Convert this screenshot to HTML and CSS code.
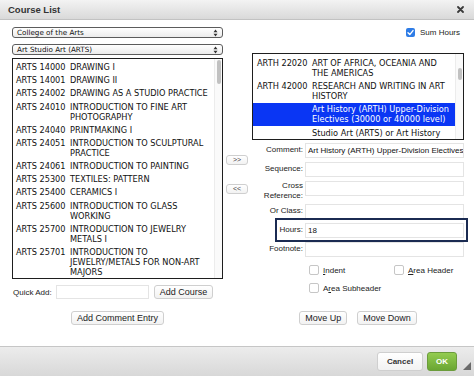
FILE: index.html
```html
<!DOCTYPE html>
<html lang="en">
<head>
  <meta charset="UTF-8" />
  <title>Course List</title>
  <link rel="stylesheet" href="styles.css">
</head>
<body>
  <div class="dialog">
    <div class="titlebar">
      <h1>Course List</h1>
      <svg class="close" width="7" height="7" viewBox="0 0 7 7"><path d="M1 1L6 6M6 1L1 6" stroke="#3a3a3a" stroke-width="1.8" stroke-linecap="round"/></svg>
    </div>

    <div class="content">
      <div class="left">
        <div class="select">
          <span>College of the Arts</span>
          <svg width="5" height="8" viewBox="0 0 5 8"><path d="M0.5 3.2L2.5 0.6L4.5 3.2Z M0.5 4.8L2.5 7.4L4.5 4.8Z" fill="#333"/></svg>
        </div>
        <div class="select">
          <span>Art Studio Art (ARTS)</span>
          <svg width="5" height="8" viewBox="0 0 5 8"><path d="M0.5 3.2L2.5 0.6L4.5 3.2Z M0.5 4.8L2.5 7.4L4.5 4.8Z" fill="#333"/></svg>
        </div>

        <div class="listbox tall">
          <div class="items">
            <div class="item"><span class="code">ARTS 14000</span><span class="name">DRAWING I</span></div>
            <div class="item"><span class="code">ARTS 14001</span><span class="name">DRAWING II</span></div>
            <div class="item"><span class="code">ARTS 24002</span><span class="name">DRAWING AS A STUDIO PRACTICE</span></div>
            <div class="item"><span class="code">ARTS 24010</span><span class="name">INTRODUCTION TO FINE ART PHOTOGRAPHY</span></div>
            <div class="item"><span class="code">ARTS 24040</span><span class="name">PRINTMAKING I</span></div>
            <div class="item"><span class="code">ARTS 24051</span><span class="name">INTRODUCTION TO SCULPTURAL PRACTICE</span></div>
            <div class="item"><span class="code">ARTS 24061</span><span class="name">INTRODUCTION TO PAINTING</span></div>
            <div class="item"><span class="code">ARTS 25300</span><span class="name">TEXTILES: PATTERN</span></div>
            <div class="item"><span class="code">ARTS 25400</span><span class="name">CERAMICS I</span></div>
            <div class="item"><span class="code">ARTS 25600</span><span class="name">INTRODUCTION TO GLASS WORKING</span></div>
            <div class="item"><span class="code">ARTS 25700</span><span class="name">INTRODUCTION TO JEWELRY METALS I</span></div>
            <div class="item"><span class="code">ARTS 25701</span><span class="name">INTRODUCTION TO JEWELRY/METALS FOR NON-ART MAJORS</span></div>
          </div>
          <div class="scroll"><div class="thumb"></div></div>
        </div>

        <div class="quick">
          <label>Quick Add:</label>
          <input type="text" />
          <button>Add Course</button>
        </div>

        <div class="actions">
          <button>Add Comment Entry</button>
        </div>
      </div>

      <div class="mid">
        <button>&gt;&gt;</button>
        <button>&lt;&lt;</button>
      </div>

      <div class="right">
        <div class="sum">
          <span class="check-on">
            <svg width="9" height="9" viewBox="0 0 9 9"><path d="M2 4.8L3.8 6.6L7 2.6" fill="none" stroke="#fff" stroke-width="1.4" stroke-linecap="round" stroke-linejoin="round"/></svg>
          </span>
          <span>Sum Hours</span>
        </div>

        <div class="listbox short">
          <div class="items">
            <div class="item"><span class="code">ARTH 22020</span><span class="name">ART OF AFRICA, OCEANIA AND THE AMERICAS</span></div>
            <div class="item"><span class="code">ARTH 42000</span><span class="name">RESEARCH AND WRITING IN ART HISTORY</span></div>
            <div class="item sel"><span class="code"></span><span class="name">Art History (ARTH) Upper-Division Electives (30000 or 40000 level)</span></div>
            <div class="item"><span class="code"></span><span class="name">Studio Art (ARTS) or Art History</span></div>
          </div>
          <div class="scroll"><div class="thumb"></div></div>
        </div>

        <div class="form">
          <div class="row">
            <label>Comment:</label>
            <input type="text" value="Art History (ARTH) Upper-Division Electives" />
          </div>
          <div class="row">
            <label>Sequence:</label>
            <input type="text" />
          </div>
          <div class="row two">
            <label>Cross Reference:</label>
            <input type="text" />
          </div>
          <div class="row">
            <label>Or Class:</label>
            <input type="text" />
          </div>
          <div class="row focus">
            <label>Hours:</label>
            <input type="text" value="18" />
          </div>
          <div class="row">
            <label>Footnote:</label>
            <input type="text" />
          </div>
        </div>

        <div class="checks">
          <div class="opt"><span class="box"></span><span><u>I</u>ndent</span></div>
          <div class="opt"><span class="box"></span><span><u>A</u>rea Header</span></div>
          <div class="opt"><span class="box"></span><span>A<u>r</u>ea Subheader</span></div>
        </div>

        <div class="actions">
          <button>Move Up</button>
          <button>Move Down</button>
        </div>
      </div>
    </div>

    <div class="footer">
      <button class="btn cancel">Cancel</button>
      <button class="btn ok">OK</button>
      <svg class="grip" width="8" height="8" viewBox="0 0 8 8"><path d="M8 0L8 8L0 8Z" fill="#6a6a6a"/></svg>
    </div>
  </div>
</body>
</html>
```

FILE: styles.css
```css
:root {
  --ui: "Liberation Sans", Arial, sans-serif;
  --list: "DejaVu Sans", Verdana, sans-serif;
  --select: #0a36f4;
  --field: #e4e4e4;
}

* {
  box-sizing: border-box;
}

body {
  margin: 0;
  font-family: var(--ui);
  font-size: 8px;
  color: #222;
  background: #fff;
}

.dialog {
  width: 474px;
  height: 376px;
  display: flex;
  flex-direction: column;
  overflow: hidden;
}

/* title bar */
.titlebar {
  height: 20px;
  flex: none;
  display: flex;
  align-items: center;
  justify-content: space-between;
  padding: 0 10px 0 8px;
  background: linear-gradient(#f3f3f3, #d9d9d9);
  border-bottom: 1px solid #c2c2c2;
}

.titlebar h1 {
  margin: 0;
  font-size: 9.5px;
  font-weight: bold;
  color: #333;
}

/* main area */
.content {
  flex: 1;
  display: flex;
  padding: 7px 10px 0 12px;
}

.left {
  width: 211px;
}

.mid {
  width: 29px;
  display: flex;
  flex-direction: column;
  gap: 19px;
  padding: 128px 0 0 3px;
}

.right {
  width: 212px;
}

.select {
  height: 11px;
  display: flex;
  align-items: center;
  justify-content: space-between;
  padding: 0 4px 0 4px;
  margin-bottom: 6px;
  border: 1px solid #5c5c5c;
  border-radius: 3px;
  background: linear-gradient(#fff, #ececec);
  font-family: var(--list);
  font-size: 7.2px;
  color: #111;
}

.select + .select {
  margin-bottom: 3px;
}

/* list boxes */
.listbox {
  display: flex;
  border: 1px solid #1e1e1e;
  background: #fff;
  overflow: hidden;
  font-family: var(--list);
  font-size: 8.2px;
  line-height: 10px;
  color: #111;
}

.listbox.tall {
  height: 221px;
}

.listbox.short {
  height: 87px;
  margin-top: 15px;
}

.items {
  flex: 1;
  overflow: hidden;
  padding-top: 1.4px;
}

.short .items {
  padding-top: 2.4px;
}

.item {
  display: flex;
  padding: 1.6px 1px 1.6px 3px;
}

.short .item {
  padding: 1.6px 3px 1.6px 4px;
}

.item .code {
  width: 54px;
  flex: none;
}

.short .item .code {
  width: 55px;
}

.item .name {
  flex: 1;
}

.item.sel {
  background: var(--select);
  color: #fff;
}

.scroll {
  width: 8px;
  flex: none;
  background: #fafafa;
  border-left: 1px solid #ececec;
}

.thumb {
  width: 4px;
  height: 24px;
  margin: 1px auto 0;
  border-radius: 2px;
  background: #c1c1c1;
}

.short .thumb {
  height: 12px;
  margin-top: 14px;
}

/* buttons */
button {
  height: 14px;
  padding: 0 5px;
  border: 1px solid #cfcfcf;
  border-radius: 3px;
  background: linear-gradient(#fff, #f2f2f2);
  font-family: var(--ui);
  font-size: 9px;
  line-height: 12px;
  color: #222;
}

.mid button {
  width: 22px;
  height: 10px;
  padding: 0;
  font-size: 7px;
  line-height: 8px;
  color: #444;
}

.actions {
  display: flex;
  justify-content: center;
  gap: 10px;
}

.left .actions {
  margin-top: 12px;
}

.right .actions {
  margin-top: 18px;
}

.quick {
  display: flex;
  align-items: center;
  height: 14px;
  margin-top: 6px;
  padding-left: 1px;
}

.quick input {
  width: 93px;
  height: 14px;
  margin-left: 4px;
  border: 1px solid var(--field);
}

.quick button {
  margin-left: 5px;
}

/* right side form */
.sum {
  height: 11px;
  display: flex;
  align-items: center;
  justify-content: flex-end;
  gap: 5px;
  padding-right: 4px;
}

.check-on {
  width: 9px;
  height: 9px;
  display: flex;
  border-radius: 2px;
  background: #2e7ce6;
}

.form {
  display: flex;
  flex-direction: column;
  gap: 4px;
  margin-top: 3px;
}

.row {
  display: flex;
  align-items: flex-start;
}

.row label {
  width: 51px;
  flex: none;
  margin-right: 2px;
  padding-top: 2px;
  text-align: right;
  line-height: 9.5px;
  color: #222;
}

.row.two label {
  padding-top: 0;
}

.row input {
  flex: 1;
  min-width: 0;
  height: 15px;
  padding: 0 0 0 2px;
  border: 1px solid var(--field);
  font-family: var(--ui);
  font-size: 8px;
  color: #111;
}

.row.focus {
  position: relative;
}

.row.focus::after {
  content: "";
  position: absolute;
  left: 23px;
  right: -4px;
  top: -5px;
  bottom: -4px;
  border: 2px solid #1b2b52;
}

.checks {
  display: grid;
  grid-template-columns: 85px auto;
  row-gap: 8px;
  margin-top: 8px;
  padding-left: 57px;
}

.opt {
  height: 10px;
  display: flex;
  align-items: center;
  gap: 4px;
}

.box {
  width: 10px;
  height: 10px;
  border: 1px solid #c6c6c6;
  border-radius: 2px;
  background: #fff;
}

/* footer */
.footer {
  height: 30px;
  flex: none;
  display: flex;
  align-items: center;
  justify-content: flex-end;
  gap: 4px;
  padding-right: 3px;
  border-top: 1px solid #c6c6c6;
  background: linear-gradient(#ececec, #d8d8d8);
}

.footer .btn {
  height: 19px;
  padding: 0;
  font-size: 8px;
  font-weight: bold;
}

.cancel {
  width: 46px;
  color: #333;
}

.ok {
  width: 30px;
  border-color: #6b9c3b;
  background: linear-gradient(#93cc50, #6aa632);
  color: #fff;
}

.grip {
  align-self: flex-end;
  margin: 0 0 6px 2px;
}
```
